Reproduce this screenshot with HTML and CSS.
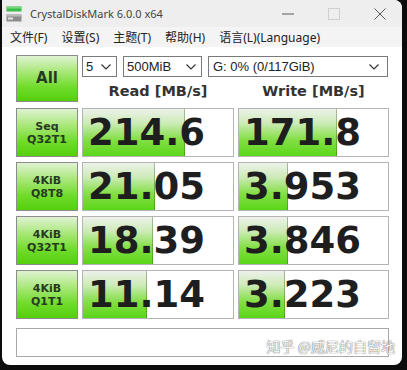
FILE: index.html
```html
<!DOCTYPE html>
<html lang="zh-CN">
  <head>
    <meta charset="UTF-8" />
    <meta name="viewport" content="width=device-width, initial-scale=1.0" />
    <title>CrystalDiskMark 6.0.0 x64</title>
    <link rel="stylesheet" href="styles.css">
  </head>
  <body>
    <div class="window">
      <!-- 标题栏 -->
      <div class="titlebar">
        <svg class="app-icon" width="16" height="16" viewBox="0 0 16 16">
          <rect x="0.5" y="0.5" width="15" height="5" fill="#3dbb4a" />
          <rect x="0.5" y="0.5" width="15" height="2" fill="#7bd77f" />
          <rect x="0.5" y="8.5" width="15" height="7" fill="#8c8c8c" />
          <rect x="0.5" y="8.5" width="15" height="2" fill="#b9b9b9" />
          <rect x="2" y="11.5" width="5" height="2" fill="#e6e6e6" />
        </svg>
        <span class="title">CrystalDiskMark 6.0.0 x64</span>
        <div class="controls">
          <svg class="ctl" width="12" height="12" viewBox="0 0 12 12"><line x1="0" y1="6" x2="12" y2="6" stroke="#5a5a5a" stroke-width="1" /></svg>
          <svg class="ctl" width="12" height="12" viewBox="0 0 12 12"><rect x="0.5" y="0.5" width="11" height="11" fill="none" stroke="#d0d0d0" stroke-width="1" /></svg>
          <svg class="ctl" width="12" height="12" viewBox="0 0 12 12"><path d="M0.5 0.5 L11.5 11.5 M11.5 0.5 L0.5 11.5" stroke="#5a5a5a" stroke-width="1" /></svg>
        </div>
      </div>

      <!-- 菜单 -->
      <div class="menubar">
        <span>文件(F)</span>
        <span>设置(S)</span>
        <span>主题(T)</span>
        <span>帮助(H)</span>
        <span>语言(L)(Language)</span>
      </div>

      <div class="main">
        <div class="top">
          <button class="test all">All</button>
          <div class="selects">
            <div class="select s-count"><span>5</span>
              <svg width="10" height="6" viewBox="0 0 10 6"><polyline points="0.5,0.5 5,5 9.5,0.5" fill="none" stroke="#333" stroke-width="1.2" /></svg>
            </div>
            <div class="select s-size"><span>500MiB</span>
              <svg width="10" height="6" viewBox="0 0 10 6"><polyline points="0.5,0.5 5,5 9.5,0.5" fill="none" stroke="#333" stroke-width="1.2" /></svg>
            </div>
            <div class="select s-drive"><span>G: 0% (0/117GiB)</span>
              <svg width="10" height="6" viewBox="0 0 10 6"><polyline points="0.5,0.5 5,5 9.5,0.5" fill="none" stroke="#333" stroke-width="1.2" /></svg>
            </div>
          </div>
          <div class="head">Read [MB/s]</div>
          <div class="head">Write [MB/s]</div>
        </div>

        <!-- 结果 -->
        <div class="results">
          <button class="test"><span>Seq</span><span>Q32T1</span></button>
          <div class="cell"><div class="bar" style="width:67%"></div><span class="val">214.6</span></div>
          <div class="cell"><div class="bar" style="width:65%"></div><span class="val">171.8</span></div>

          <button class="test"><span>4KiB</span><span>Q8T8</span></button>
          <div class="cell"><div class="bar" style="width:47%"></div><span class="val">21.05</span></div>
          <div class="cell"><div class="bar" style="width:32%"></div><span class="val">3.953</span></div>

          <button class="test"><span>4KiB</span><span>Q32T1</span></button>
          <div class="cell"><div class="bar" style="width:46%"></div><span class="val">18.39</span></div>
          <div class="cell"><div class="bar" style="width:32%"></div><span class="val">3.846</span></div>

          <button class="test"><span>4KiB</span><span>Q1T1</span></button>
          <div class="cell"><div class="bar" style="width:42%"></div><span class="val">11.14</span></div>
          <div class="cell"><div class="bar" style="width:30%"></div><span class="val">3.223</span></div>
        </div>

        <div class="comment"></div>
      </div>

      <div class="watermark">知乎 @威尼的自留地</div>
    </div>
  </body>
</html>
```

FILE: styles.css
```css
body{
  margin: 0;
  width: 407px;
  height: 370px;
  background-color: #0c0c0c;
  overflow: hidden;
}
/* 窗口 */
.window{
  position: relative;
  margin-left: 2px;
  width: 400px;
  height: 365px;
  background-color: #fff;
  border-radius: 0 8px 8px 8px;
  overflow: hidden;
  font-family: "Liberation Sans", "Noto Sans CJK SC", sans-serif;
}
.titlebar{
  display: flex;
  align-items: center;
  height: 27px;
  padding-left: 4px;
  background-color: #eeeeee;
}
.app-icon{
  margin-right: 8px;
}
.title{
  font-family: "Noto Sans", sans-serif;
  font-size: 11px;
  color: #444;
}
.controls{
  display: flex;
  align-items: center;
  gap: 34px;
  margin-left: auto;
  margin-right: 16px;
}
.menubar{
  display: flex;
  align-items: center;
  gap: 14px;
  height: 20px;
  padding-left: 8px;
  background-color: #f4f4f4;
  font-family: "Noto Sans", "Noto Sans CJK SC", sans-serif;
  font-size: 12px;
  color: #222;
}
/* 主体 */
.main{
  padding: 8px 0 0 14px;
}
.top{
  display: grid;
  grid-template-columns: 62px 152px 151px;
  grid-template-rows: 22px 25px;
  column-gap: 4px;
}
.test{
  margin: 0;
  padding: 0;
  display: flex;
  flex-direction: column;
  align-items: center;
  justify-content: center;
  border: 1px solid #8c8c8c;
  background: linear-gradient(#dff3d2 0%, #a9e779 35%, #6fdb2a 70%, #55cf0e 100%);
  font-family: "DejaVu Sans", sans-serif;
  font-weight: 700;
  font-size: 11px;
  line-height: 13px;
  color: #263a22;
}
.all{
  grid-row: 1 / 3;
  font-size: 15px;
}
.selects{
  grid-column: 2 / 4;
  display: flex;
  gap: 6px;
  padding-top: 1px;
  padding-right: 1px;
}
.select{
  display: flex;
  align-items: center;
  justify-content: space-between;
  height: 21px;
  box-sizing: border-box;
  border: 1px solid #7a7a7a;
  padding: 0 5px 0 3px;
  font-size: 13px;
  color: #222;
}
.s-count{ width: 35px; }
.s-size{ width: 79px; }
.s-drive{ flex: 1; padding-left: 4px; padding-right: 8px; }
.head{
  padding-top: 6px;
  text-align: center;
  font-family: "DejaVu Sans", sans-serif;
  font-weight: 700;
  font-size: 14.5px;
  color: #333;
}
.results{
  display: grid;
  grid-template-columns: 62px 152px 151px;
  grid-auto-rows: 49px;
  column-gap: 4px;
  row-gap: 5px;
  margin-top: 6px;
}
.cell{
  position: relative;
  display: flex;
  align-items: center;
  border: 1px solid #b4b4b4;
  background-color: #fff;
}
.bar{
  position: absolute;
  left: 0;
  top: 0;
  bottom: 0;
  border-right: 1px solid rgba(40, 80, 20, 0.35);
  background: linear-gradient(#edf1ea 0%, #cdebb8 30%, #84df45 65%, #5bd61a 100%);
}
.val{
  position: relative;
  padding-left: 5px;
  font-family: "DejaVu Sans", sans-serif;
  font-weight: 700;
  font-size: 37px;
  line-height: 1;
  color: #1e1e1e;
}
.comment{
  margin-top: 9px;
  width: 373px;
  height: 29px;
  box-sizing: border-box;
  border: 1px solid #a8a8a8;
}
.watermark{
  position: absolute;
  right: 7px;
  bottom: 9px;
  font-family: "Noto Sans CJK SC", sans-serif;
  font-size: 14px;
  color: rgba(255, 255, 255, 0.95);
  text-shadow: 0 0 1px #666, 0 0 1px #888;
}
```
